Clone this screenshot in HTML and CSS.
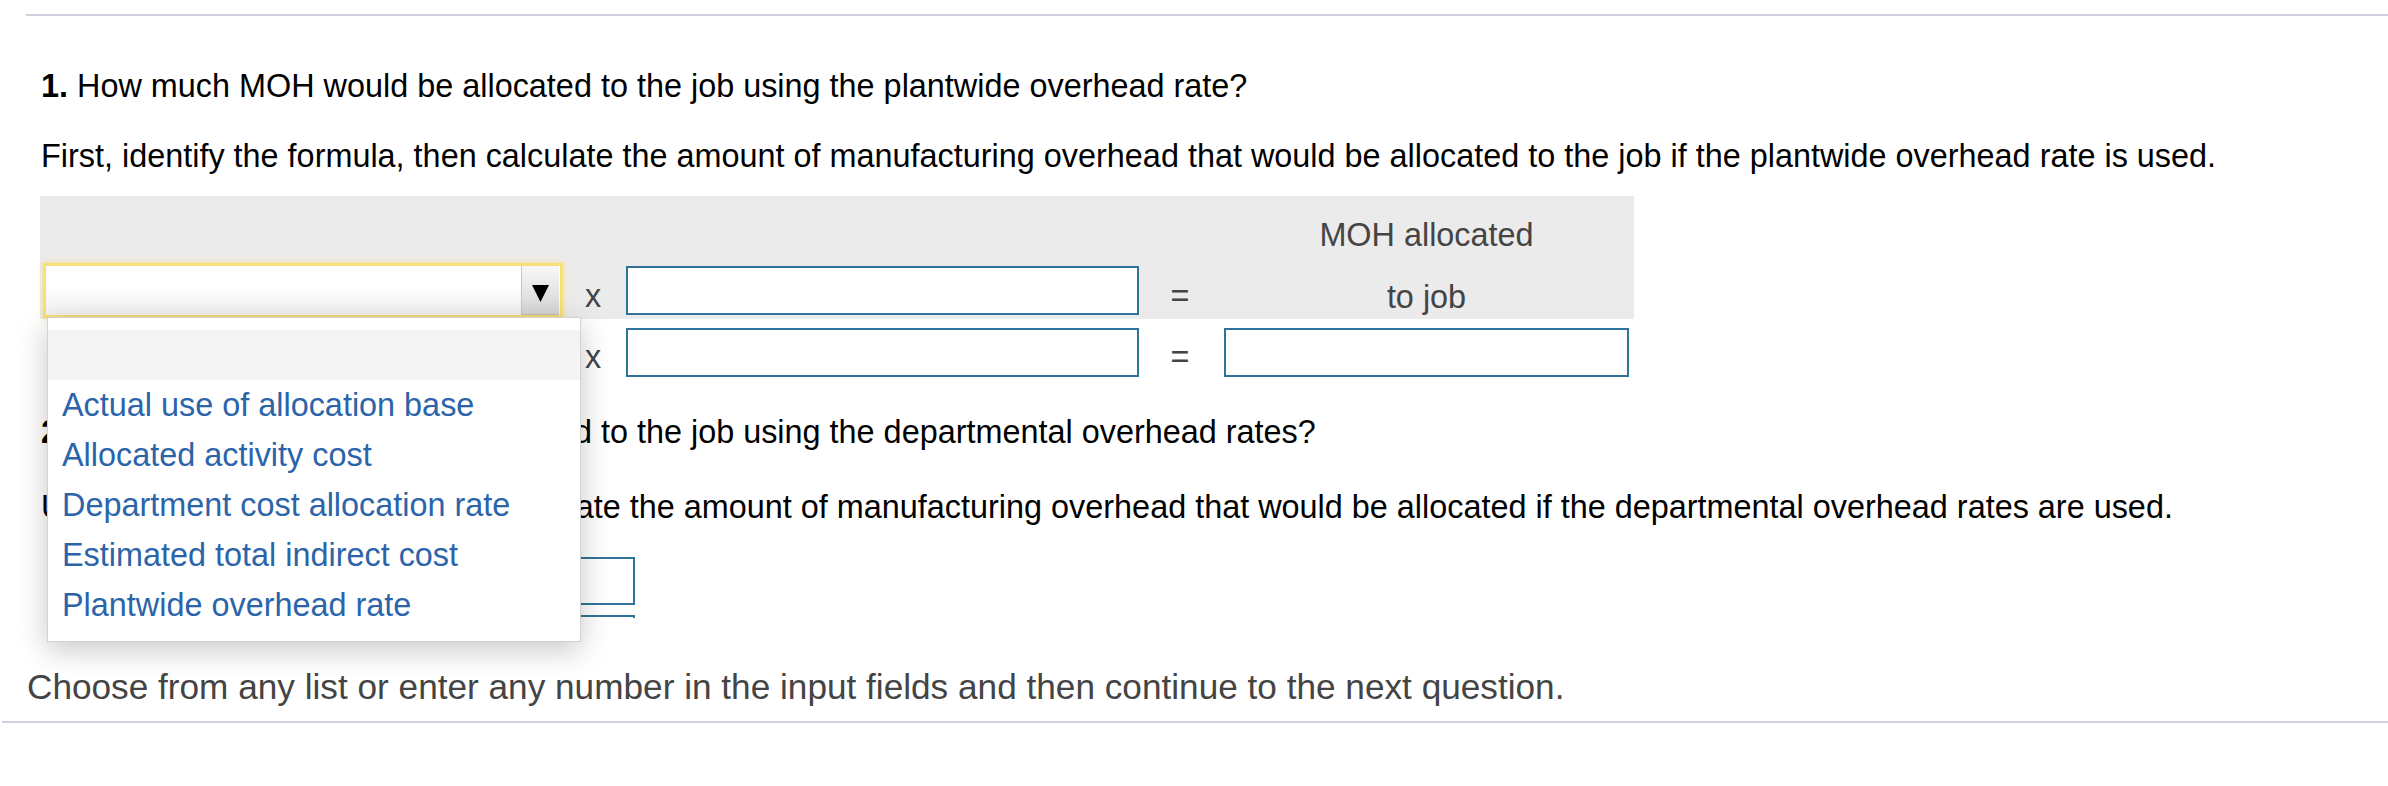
FILE: index.html
```html
<!DOCTYPE html>
<html lang="en">
<head>
<meta charset="utf-8">
<title>MOH allocation</title>
<link rel="stylesheet" href="styles.css">
</head>
<body>
<div class="page">
  <div class="rule rule-top"></div>
  <div class="question">
    <p class="line q1"><b>1.</b> How much MOH would be allocated to the job using the plantwide overhead rate?</p>
    <p class="line intro">First, identify the formula, then calculate the amount of manufacturing overhead that would be allocated to the job if the plantwide overhead rate is used.</p>
    <div class="formula">
      <div class="cell head c-select">
        <div class="select">
          <div class="select-btn">
            <svg width="17" height="17" viewBox="0 0 17 17"><polygon points="0,0 17,0 8.5,17" fill="#000"/></svg>
          </div>
        </div>
      </div>
      <div class="cell head op">x</div>
      <div class="cell head c-input"><input class="box" type="text"></div>
      <div class="cell head op">=</div>
      <div class="cell head c-label">
        <div class="label">
          <div class="label-line first">MOH allocated</div>
          <div class="label-line">to job</div>
        </div>
      </div>
      <div class="cell row2"></div>
      <div class="cell row2 op">x</div>
      <div class="cell row2 c-input"><input class="box" type="text"></div>
      <div class="cell row2 op">=</div>
      <div class="cell row2 c-result"><input class="box result" type="text"></div>
    </div>
    <p class="line q2"><b>2.</b> How much MOH would be allocated to the job using the departmental overhead rates?</p>
    <p class="line intro2">Using both departmental rates, calculate the amount of manufacturing overhead that would be allocated if the departmental overhead rates are used.</p>
    <div class="formula-b">
      <div class="spacer"></div>
      <div class="pbox"></div>
      <div class="spacer"></div>
      <div class="pbox"></div>
    </div>
  </div>
  <div class="dropdown">
    <div class="opt blank"></div>
    <div class="opt">Actual use of allocation base</div>
    <div class="opt">Allocated activity cost</div>
    <div class="opt">Department cost allocation rate</div>
    <div class="opt">Estimated total indirect cost</div>
    <div class="opt">Plantwide overhead rate</div>
  </div>
  <p class="line hint">Choose from any list or enter any number in the input fields and then continue to the next question.</p>
  <div class="rule rule-bottom"></div>
</div>
</body>
</html>
```

FILE: styles.css
```css
body {
  margin: 0;
  background: #fff;
  color: #000;
  font-family: "Liberation Sans", Arial, Helvetica, sans-serif;
  font-size: 32.4px;
}

.page {
  position: relative;
  width: 2388px;
  height: 786px;
  overflow: hidden;
}

.rule {
  height: 2px;
  background: #ced1dc;
}

.rule-top {
  margin: 14px 0 0 26px;
}

.rule-bottom {
  margin: 14px 0 0 2px;
}

.question {
  height: 602px;
  overflow: hidden;
  padding-left: 41px;
}

.line {
  margin: 0;
  line-height: 40px;
  white-space: nowrap;
}

.q1 { margin-top: 50px; }
.intro { margin-top: 30px; }
.q2 { margin-top: 31px; }
.intro2 { margin-top: 35px; }

.formula {
  margin: 20px 0 0 -1px;
  width: 1594px;
  display: grid;
  grid-template-columns: 535px 36px 543px 52px 428px;
  grid-template-rows: 123px 62px;
}

.cell {
  display: flex;
}

.head {
  background: #ebebeb;
  align-items: flex-end;
}

.row2 {
  align-items: flex-start;
}

.op {
  justify-content: center;
  color: #444;
  line-height: 40px;
}

.head.op { padding-bottom: 3px; }
.row2.op { padding-top: 18px; }

.c-select {
  padding: 0 0 4px 6px;
}

.select {
  width: 514px;
  height: 49px;
  box-sizing: border-box;
  background: linear-gradient(#fff 40%, #f1f1f1);
  box-shadow: 0 0 0 3px #f8df78, 0 0 6px 3px rgba(248, 220, 104, 0.75);
  display: flex;
  justify-content: flex-end;
}

.select-btn {
  width: 38px;
  height: 49px;
  margin-right: 1px;
  box-sizing: border-box;
  background: linear-gradient(#f8f8f8, #d5d5d5);
  border-left: 1px solid #c6c6c6;
  border-bottom: 1px solid #bdbdbd;
  display: flex;
  align-items: center;
  justify-content: center;
  padding-top: 6px;
}

.select-btn svg { display: block; }

.c-input { padding-left: 15px; }
.head.c-input { padding-bottom: 4px; }
.row2.c-input { padding-top: 9px; }

.c-result { padding: 9px 0 0 18px; }

.box {
  display: block;
  width: 513px;
  height: 49px;
  box-sizing: border-box;
  margin: 0;
  padding: 0;
  border: 2px solid #30739a;
  background: #fff;
  font: inherit;
}

.box.result { width: 405px; }

.c-label {
  padding: 0 0 2px 18px;
}

.label {
  width: 405px;
  text-align: center;
  color: #444;
  line-height: 40px;
}

.label-line.first { margin-bottom: 22px; }

.formula-b {
  margin-top: 30px;
  display: grid;
  grid-template-columns: 394px 200px;
  grid-auto-rows: 48px;
  row-gap: 10px;
}

.pbox {
  box-sizing: border-box;
  border: 2px solid #30739a;
  background: #fff;
}

.dropdown {
  position: absolute;
  left: 47px;
  top: 317px;
  width: 534px;
  box-sizing: border-box;
  padding: 12px 0 11px;
  background: #fff;
  border: 1px solid #d2d2d2;
  box-shadow: 0 8px 28px rgba(0, 0, 0, 0.22);
}

.opt {
  height: 50px;
  line-height: 50px;
  padding-left: 14px;
  color: #2b64a9;
  white-space: nowrap;
}

.opt.blank { background: #f4f4f4; }

.hint {
  margin: 49px 0 0 27px;
  font-size: 35.2px;
  color: #444;
}
```
